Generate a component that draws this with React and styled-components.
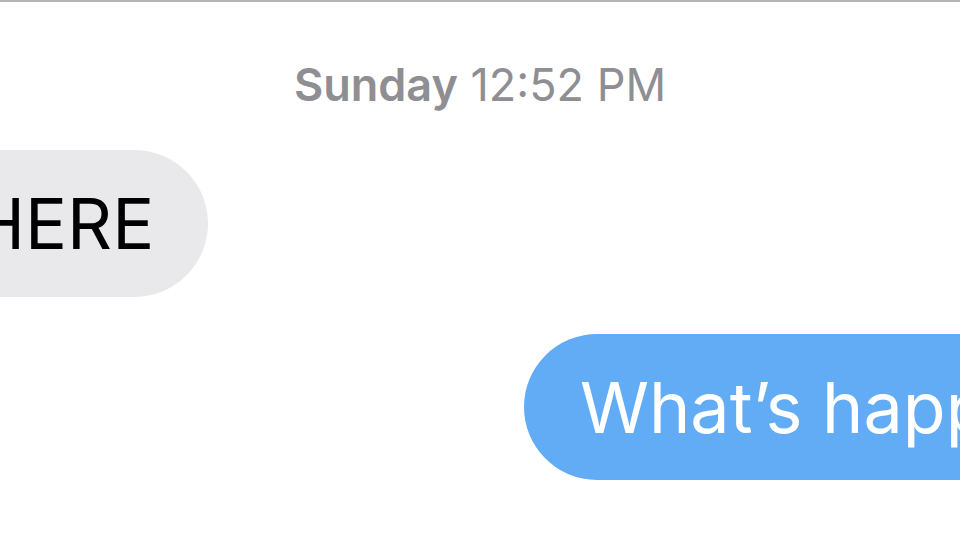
import React from 'react';
import styled, { createGlobalStyle } from 'styled-components';

const Global = createGlobalStyle`
    html, body {
        margin: 0;
        padding: 0;
        background: #fff;
        overflow: hidden;
    }
`;

const Screen = styled.div`
    background: #fff;
    border-top: 2px solid #b4b4b6;
    box-sizing: border-box;
    display: flex;
    flex-direction: column;
    font-family: Inter, "Noto Sans", sans-serif;
    height: 540px;
    overflow: hidden;
    width: 960px;
`;

const Stamp = styled.div`
    color: #8e8e93;
    font-size: 45px;
    line-height: 54px;
    margin-top: 56px;
    text-align: center;
    white-space: nowrap;
`;

const Day = styled.span`
    font-weight: 600;
`;

const Row = styled.div`
    display: flex;
    margin-top: ${({ gap }) => gap}px;
`;

const Bubble = styled.div`
    align-items: center;
    background: ${({ mine }) => (mine ? '#61acf5' : '#e9e9eb')};
    border-radius: 74px;
    box-sizing: border-box;
    color: ${({ mine }) => (mine ? '#fff' : '#000')};
    display: flex;
    flex-shrink: 0;
    font-size: 70px;
    height: 147px;
    white-space: nowrap;
`;

const Incoming = styled(Bubble)`
    margin-left: -120px;
    padding: 0 54px 0 93px;
`;

const Outgoing = styled(Bubble)`
    height: 146px;
    margin-left: 524px;
    padding: 0 80px 0 56px;
`;

export default function App() {
    return (
        <>
            <Global />
            <Screen>
                <Stamp>
                    <Day>Sunday</Day> 12:52 PM
                </Stamp>
                <Row gap={38}>
                    <Incoming>HERE</Incoming>
                </Row>
                <Row gap={37}>
                    <Outgoing mine>What’s happening?</Outgoing>
                </Row>
            </Screen>
        </>
    );
}
